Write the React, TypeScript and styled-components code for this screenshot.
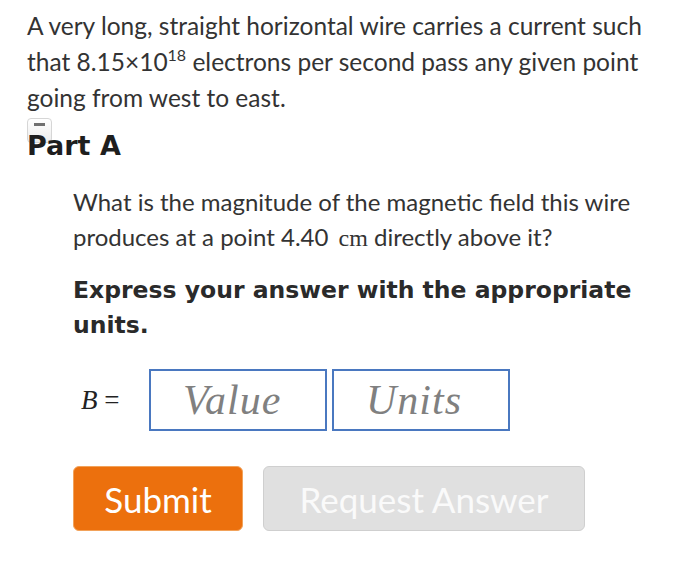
import React from "react";
import styled, { createGlobalStyle } from "styled-components";

const GlobalStyle = createGlobalStyle`
  body {
    margin: 0;
    background: #ffffff;
    font-family: Lato, "Open Sans", sans-serif;
    color: #333333;
  }
`;

const App = () => {
  return (
    <>
      <GlobalStyle />
      <Page>
        <Intro>
          A very long, straight horizontal wire carries a current such that{" "}
          8.15×10<Sup>18</Sup> electrons per second pass any given point going
          from west to east.
        </Intro>

        <PartHeader>
          <Toggle aria-label="collapse">
            <Dash />
          </Toggle>
          <PartTitle>Part A</PartTitle>
        </PartHeader>

        <Question>
          <Prompt>
            What is the magnitude of the magnetic field this wire produces at a
            point 4.40 <Unit>cm</Unit> directly above it?
          </Prompt>
          <Instruction>Express your answer with the appropriate units.</Instruction>

          <AnswerRow>
            <Label>
              <Var>B</Var> =
            </Label>
            <Field>Value</Field>
            <Field>Units</Field>
          </AnswerRow>

          <ButtonRow>
            <SubmitButton>Submit</SubmitButton>
            <RequestButton disabled>Request Answer</RequestButton>
          </ButtonRow>
        </Question>
      </Page>
    </>
  );
};

export default App;

const Page = styled.div`
  width: 700px;
  height: 564px;
  box-sizing: border-box;
  padding: 8px 27px 0 27px;
  overflow: hidden;
`;

const Intro = styled.p`
  margin: 0;
  font-size: 24.5px;
  line-height: 36px;
  width: 646px;
`;

const Sup = styled.sup`
  font-size: 16px;
  line-height: 0;
  vertical-align: 10px;
`;

const PartHeader = styled.div`
  position: relative;
  margin-top: 2px;
  height: 44px;
`;

const Toggle = styled.div`
  position: absolute;
  left: 0;
  top: 0;
  width: 25px;
  height: 25px;
  box-sizing: border-box;
  border: 1px solid #d6d6d6;
  border-radius: 4px;
  background: linear-gradient(#ffffff, #ececec);
`;

const Dash = styled.span`
  position: absolute;
  left: 6px;
  top: 4px;
  width: 11px;
  height: 3px;
  background: #707070;
`;

const PartTitle = styled.h2`
  position: relative;
  margin: 0;
  padding-top: 13px;
  font-family: "DejaVu Sans", Verdana, sans-serif;
  font-weight: bold;
  font-size: 27px;
  line-height: 30px;
  color: #1e1e1e;
`;

const Question = styled.div`
  padding-left: 46px;
  margin-top: 22px;
`;

const Prompt = styled.p`
  margin: 0;
  font-size: 24px;
  line-height: 35px;
  width: 580px;
`;

const Unit = styled.span`
  font-family: "Liberation Serif", "Times New Roman", serif;
  font-size: 24px;
  margin-left: 4px;
`;

const Instruction = styled.p`
  margin: 17px 0 0 0;
  font-family: "DejaVu Sans", Verdana, sans-serif;
  font-weight: bold;
  font-size: 23.5px;
  line-height: 35px;
  width: 580px;
  color: #2a2a2a;
`;

const AnswerRow = styled.div`
  display: flex;
  align-items: center;
  margin-top: 26px;
  margin-left: 8px;
`;

const Label = styled.span`
  font-family: "Liberation Serif", "Times New Roman", serif;
  font-size: 27px;
  width: 68px;
  color: #222222;
`;

const Var = styled.i`
  font-family: "Liberation Serif", "Times New Roman", serif;
`;

const Field = styled.div`
  width: 178px;
  height: 62px;
  box-sizing: border-box;
  border: 2px solid #4a78c0;
  margin-right: 5px;
  padding-left: 32px;
  display: flex;
  align-items: center;
  font-family: "Liberation Serif", "Times New Roman", serif;
  font-style: italic;
  font-size: 42px;
  letter-spacing: 1px;
  color: #808080;
`;

const ButtonRow = styled.div`
  display: flex;
  gap: 20px;
  margin-top: 35px;
`;

const BaseButton = styled.button`
  height: 65px;
  box-sizing: border-box;
  border-radius: 6px;
  font-family: Lato, "Open Sans", sans-serif;
  font-size: 35px;
  padding: 0;
`;

const SubmitButton = styled(BaseButton)`
  width: 170px;
  background: #ec700d;
  border: 1px solid #f2a25a;
  color: #ffffff;
`;

const RequestButton = styled(BaseButton)`
  width: 322px;
  background: #e0e0e0;
  border: 1px solid #cfcfcf;
  color: #fafafa;
`;
